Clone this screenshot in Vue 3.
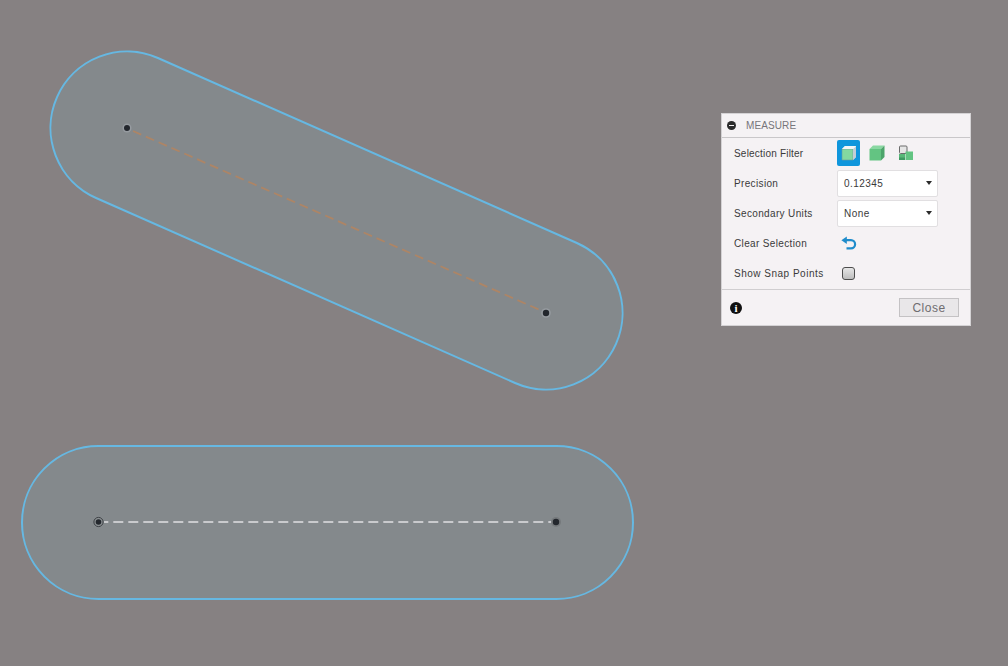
<template>
  <div class="viewport">
    <svg class="sketch" width="1008" height="666" viewBox="0 0 1008 666">
      <path
        class="slot"
        d="M157.9 58 L576.9 243 A76 76 0 0 1 515.1 383 L96.1 198 A76 76 0 0 1 157.9 58 Z"
      />
      <line class="axis-orange" x1="133" y1="131" x2="540" y2="310" />
      <circle class="point-ring" cx="127" cy="128" r="4.5" />
      <circle class="point" cx="127" cy="128" r="3" />
      <circle class="point-ring" cx="546" cy="313" r="4.8" />
      <circle class="point" cx="546" cy="313" r="3.2" />

      <path
        class="slot"
        d="M98.5 446 L556.5 446 A76.5 76.5 0 0 1 556.5 599 L98.5 599 A76.5 76.5 0 0 1 98.5 446 Z"
      />
      <line class="axis-white" x1="104" y1="522" x2="552" y2="522" />
      <circle class="point-ring dark" cx="98.5" cy="522" r="4.6" />
      <circle class="point" cx="98.5" cy="522" r="2.8" />
      <circle class="point-ring faint" cx="556" cy="522" r="5" />
      <circle class="point" cx="556" cy="522" r="3.2" />
    </svg>

    <div class="panel">
      <div class="panel-head">
        <span class="collapse"></span>
        <span class="title">MEASURE</span>
      </div>

      <div class="panel-body">
        <div class="row">
          <span class="label tight">Selection Filter</span>
          <div class="filters">
            <span class="filter active">
              <svg width="16" height="16" viewBox="0 0 16 16">
                <path d="M1 4 L4 1 H15 V12 L12 15 H1 Z" fill="#e8eef0" />
                <path d="M1 4 H12 V15 H1 Z" fill="#84d8a0" stroke="#6c9aa0" stroke-width=".6" />
                <path d="M12 4 L15 1 V12 L12 15 Z" fill="#c3ced6" />
                <path d="M1 4 L4 1 H15 L12 4 Z" fill="#f2f5f6" />
              </svg>
            </span>
            <span class="filter">
              <svg width="16" height="16" viewBox="0 0 16 16">
                <path d="M0.5 4 H12 V15.5 H0.5 Z" fill="#63c482" />
                <path d="M0.5 4 L4 0.5 H15.5 L12 4 Z" fill="#8ad8a2" />
                <path d="M12 4 L15.5 0.5 V12 L12 15.5 Z" fill="#4da56b" />
              </svg>
            </span>
            <span class="filter">
              <svg width="16" height="16" viewBox="0 0 16 16">
                <rect x="1.5" y="1" width="7.5" height="7.5" rx="1" fill="#e6e6e6" stroke="#6b6b6b" />
                <path d="M1 9 H7 V15 H1 Z" fill="#58b878" />
                <path d="M7.5 6.5 H15 V15 H7.5 Z" fill="#63c482" />
                <path d="M1 12.5 H7 V15 H1 Z" fill="#3f9a62" />
              </svg>
            </span>
          </div>
        </div>

        <div class="row">
          <span class="label">Precision</span>
          <div class="select"><span>0.12345</span><i class="caret"></i></div>
        </div>

        <div class="row">
          <span class="label">Secondary Units</span>
          <div class="select"><span>None</span><i class="caret"></i></div>
        </div>

        <div class="row">
          <span class="label">Clear Selection</span>
          <svg class="undo" width="16" height="14" viewBox="0 0 16 14">
            <path d="M5 4.2 H10 A4 4 0 0 1 10 12.4 H5.5" fill="none" stroke="#1f8ccb" stroke-width="2.2" />
            <path d="M0.4 4.2 L5.8 0.4 V8 Z" fill="#1f8ccb" />
          </svg>
        </div>

        <div class="row">
          <span class="label wide">Show Snap Points</span>
          <span class="check"></span>
        </div>
      </div>

      <div class="panel-foot">
        <span class="info">i</span>
        <span class="close-btn">Close</span>
      </div>
    </div>
  </div>
</template>

<script setup>
</script>

<style>
html,
body {
  margin: 0;
  background: #868182;
}
</style>

<style scoped>
.viewport {
  position: relative;
  width: 1008px;
  height: 666px;
  overflow: hidden;
  background: #868182;
  font-family: "Liberation Sans", Arial, sans-serif;
}
.sketch {
  display: block;
}
.slot {
  fill: #84898c;
  stroke: #66b8e2;
  stroke-width: 2;
}
.axis-orange {
  stroke: #ad8566;
  stroke-width: 1.8;
  stroke-dasharray: 9 5;
}
.axis-white {
  stroke: #dfdfe2;
  stroke-width: 1.6;
  stroke-dasharray: 10 5;
  stroke-dashoffset: 5.7;
}
.point {
  fill: #23272d;
}
.point-ring {
  fill: #969ba0;
}
.point-ring.dark {
  fill: #8b9092;
  stroke: #3b3f44;
  stroke-width: 1;
}
.point-ring.faint {
  fill: #75797c;
}
.panel {
  position: absolute;
  left: 721px;
  top: 113px;
  width: 250px;
  height: 213px;
  box-sizing: border-box;
  display: flex;
  flex-direction: column;
  background: #f5f2f4;
  border: 1px solid #d4d2d4;
  color: #3a3a3a;
  font-size: 10px;
  letter-spacing: 0.35px;
}
.panel-head {
  height: 23px;
  display: flex;
  align-items: center;
  gap: 10px;
  padding-left: 5px;
  border-bottom: 1px solid #c9c7c9;
  flex: none;
}
.collapse {
  position: relative;
  width: 9px;
  height: 9px;
  border-radius: 50%;
  background: #2b2b2b;
}
.collapse::after {
  content: "";
  position: absolute;
  left: 2px;
  top: 4px;
  width: 5px;
  height: 1px;
  background: #f5f2f4;
}
.title {
  color: #77757a;
  font-size: 10px;
  letter-spacing: 0.1px;
}
.panel-body {
  flex: 1;
  padding-left: 12px;
}
.row {
  height: 30px;
  display: flex;
  align-items: center;
}
.label {
  width: 103px;
  flex: none;
}
.label.tight {
  letter-spacing: 0.2px;
}
.label.wide {
  letter-spacing: 0.5px;
}
.filters {
  display: flex;
  align-items: center;
  gap: 5.5px;
}
.filter {
  width: 23px;
  height: 26px;
  display: flex;
  align-items: center;
  justify-content: center;
}
.filter svg {
  margin-top: -1px;
}
.filter.active {
  background: #0f96dc;
  border-radius: 2px;
}
.select {
  box-sizing: border-box;
  width: 101px;
  height: 27px;
  display: flex;
  align-items: center;
  justify-content: space-between;
  padding: 0 5px 0 6px;
  background: #fff;
  border: 1px solid #e1dfe1;
  border-radius: 2px;
  font-size: 10px;
  letter-spacing: 0.45px;
}
.caret {
  width: 0;
  height: 0;
  border-left: 3px solid transparent;
  border-right: 3px solid transparent;
  border-top: 4px solid #2b2b2b;
}
.undo {
  margin-left: 4px;
}
.check {
  box-sizing: border-box;
  width: 13px;
  height: 13px;
  margin-left: 5px;
  border: 1px solid #4c4c4c;
  border-radius: 3px;
  background: linear-gradient(#e6e6e6, #bdbdbd);
}
.panel-foot {
  flex: none;
  box-sizing: border-box;
  height: 36px;
  display: flex;
  align-items: center;
  justify-content: space-between;
  padding: 0 11px 0 8px;
  border-top: 1px solid #d0ced0;
}
.info {
  width: 12px;
  height: 12px;
  border-radius: 50%;
  background: #111;
  color: #fff;
  font-family: "Liberation Serif", serif;
  font-weight: bold;
  font-size: 11px;
  line-height: 12px;
  text-align: center;
  letter-spacing: 0;
}
.close-btn {
  box-sizing: border-box;
  width: 60px;
  height: 19px;
  display: flex;
  align-items: center;
  justify-content: center;
  background: #e9e7e9;
  border: 1px solid #c4c2c4;
  color: #6f6d70;
  font-size: 12px;
  letter-spacing: 0.5px;
}
</style>
